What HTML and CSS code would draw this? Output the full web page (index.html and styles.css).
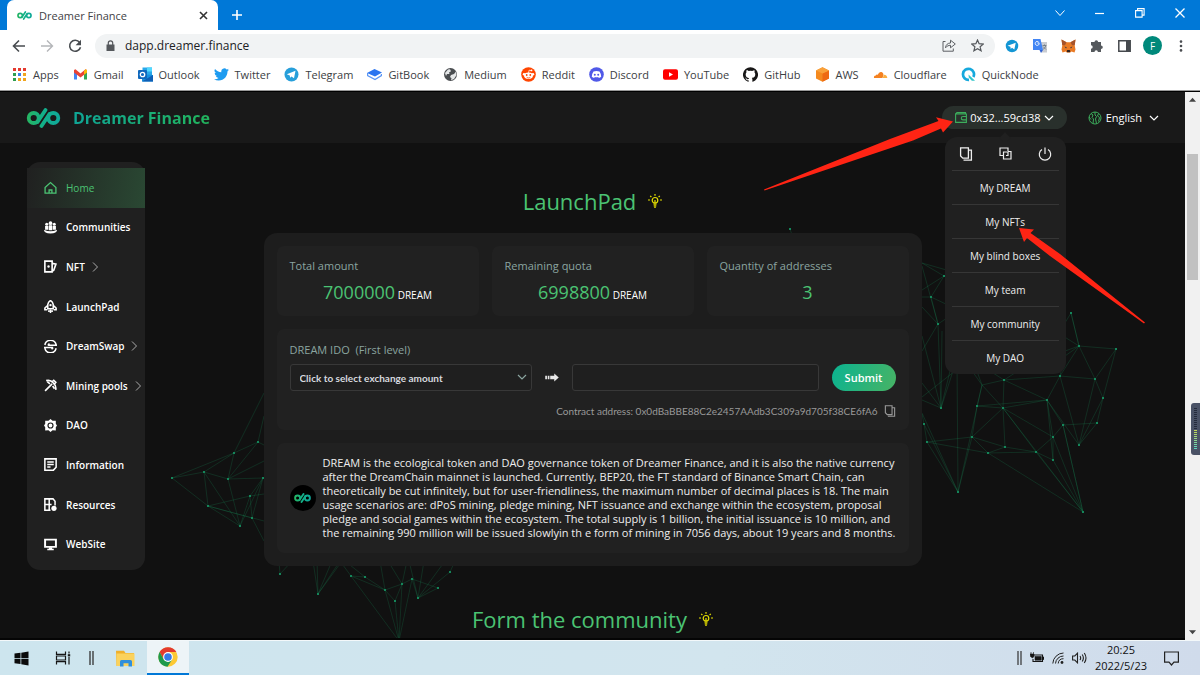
FILE: index.html
```html
<!DOCTYPE html>
<html lang="en">
<head>
<meta charset="utf-8">
<title>Dreamer Finance</title>
<link rel="stylesheet" href="styles.css">
</head>
<body>
<svg class="defs" aria-hidden="true">
  <defs>
    <linearGradient id="brand" gradientUnits="userSpaceOnUse" x1="0" y1="0" x2="34" y2="0"><stop offset="0" stop-color="#27b560"/><stop offset=".5" stop-color="#12b08a"/><stop offset="1" stop-color="#10a89b"/></linearGradient>
    <symbol id="logo" viewBox="0 0 34 20"><g fill="none" stroke="url(#brand)" stroke-width="3.800" stroke-linecap="round"><circle cx="7.200" cy="10" r="5"/><path d="M11 14L19 2"/><circle cx="26.800" cy="10" r="5"/><path d="M15 18L23 6"/></g></symbol>
    <symbol id="chev-down" viewBox="0 0 10 10"><path d="M1 3l4 4 4-4" fill="none" stroke="currentColor" stroke-width="1.2"/></symbol>
    <symbol id="chev-right" viewBox="0 0 10 10"><path d="M3 .5L7.500 5 3 9.500" fill="none" stroke="currentColor"/></symbol>
    <symbol id="copy" viewBox="0 0 14 14"><path d="M1.600.8h7.800v10.400H3.800L1.600 9zM4.500 13.200h7.900V3.200h-3" fill="none" stroke="currentColor" stroke-width="1.300"/></symbol>
    <symbol id="bulb" viewBox="0 0 14 14"><g fill="none" stroke="#e6e000" stroke-width="1.200"><circle cx="7" cy="6.300" r="2.800"/><path d="M7 0v1.800M2.200 1.800l1.200 1.200M11.800 1.800l-1.200 1.200M0 6h2M12 6h2M5.500 10.200h3M5.700 11.800h2.600M6.300 13.300h1.400M7 6v3"/></g></symbol>
  </defs>
</svg>

<div class="screen">
  <header class="tabstrip">
    <div class="tab">
      <svg class="tab-logo"><use href="#logo"/></svg>
      <span class="tab-title">Dreamer Finance</span>
      <button class="plain" aria-label="Close tab"><svg width="9" height="9" viewBox="0 0 9 9"><path d="M1 1l7 7M8 1L1 8" stroke="#333" stroke-width="1.600"/></svg></button>
    </div>
    <button class="plain new-tab" aria-label="New tab"><svg width="12" height="12" viewBox="0 0 12 12"><path d="M6 1v10M1 6h10" stroke="#fff" stroke-width="1.600"/></svg></button>
    <div class="window-controls">
      <button class="plain" aria-label="Search tabs"><svg width="10" height="10" viewBox="0 0 10 10"><path d="M.5 2.500L5 7.500l4.500-5" fill="none" stroke="#fff"/></svg></button>
      <button class="plain" aria-label="Minimize"><svg width="10" height="10" viewBox="0 0 10 10"><path d="M0 5.500h9" stroke="#fff" stroke-width="1.200"/></svg></button>
      <button class="plain" aria-label="Restore"><svg width="10" height="10" viewBox="0 0 10 10"><path d="M.6 2.600h6.500v6.500H.6zM2.600 2.600V.6h6.500v6.500h-2" fill="none" stroke="#fff" stroke-width="1.100"/></svg></button>
      <button class="plain" aria-label="Close"><svg width="10" height="10" viewBox="0 0 10 10"><path d="M.5.5l9 9M9.500.5l-9 9" stroke="#fff" stroke-width="1.300"/></svg></button>
    </div>
  </header>

  <div class="toolbar">
    <button class="plain" aria-label="Back"><svg width="14" height="14" viewBox="0 0 14 14"><path d="M13 7H2M7 1.500L1.500 7 7 12.500" fill="none" stroke="#484c50" stroke-width="1.600"/></svg></button>
    <button class="plain" aria-label="Forward"><svg width="14" height="14" viewBox="0 0 14 14"><path d="M1 7h11M7 1.500L12.500 7 7 12.500" fill="none" stroke="#b4b6b9" stroke-width="1.400"/></svg></button>
    <button class="plain" aria-label="Reload"><svg width="14" height="14" viewBox="0 0 14 14"><path d="M11.600 3.500A5.500 5.500 0 1 0 12.500 8.200" fill="none" stroke="#484c50" stroke-width="1.600"/><path d="M13 .8v5.400H7.600z" fill="#484c50"/></svg></button>
    <div class="address">
      <svg width="9" height="12" viewBox="0 0 9 12"><path d="M.5 4.500h8V11h-8z" fill="#55585c"/><path d="M2.300 5V3a2.200 2.200 0 0 1 4.400 0v2" fill="none" stroke="#55585c" stroke-width="1.200"/></svg>
      <input class="url" aria-label="Address" value="dapp.dreamer.finance">
      <button class="plain" aria-label="Share"><svg width="14" height="13" viewBox="0 0 14 13"><path d="M3.500 2.500H1v9.700h10.300V9.500" fill="none" stroke="#5c5f63"/><path d="M3.500 8.800c.3-3.200 2.300-4.700 5-4.800V1.200L13.300 5 8.500 8.800V6.300C6.500 6.300 5 7 3.500 8.800z" fill="none" stroke="#5c5f63"/></svg></button>
      <button class="plain" aria-label="Bookmark"><svg width="13" height="13" viewBox="0 0 13 13"><path d="M6.500 1l1.600 3.700 4.100.4-3.100 2.700 1 4-3.600-2.100-3.600 2.100 1-4L.8 5.100l4.100-.4z" fill="none" stroke="#55585c" stroke-width="1.200"/></svg></button>
    </div>
    <div class="extensions">
      <button class="plain" aria-label="Telegram"><svg width="14" height="14" viewBox="0 0 15 15"><circle cx="7.500" cy="7.500" r="6.700" fill="#1496d4"/><path d="M2.800 7.300l8.700-3.400-1.500 7.300-2.500-1.700-1.400 1.300-.3-2.400z" fill="#fff"/></svg></button>
      <button class="plain" aria-label="Translate"><svg width="14" height="14" viewBox="0 0 14 14"><path d="M6 3h8v10.500H8.500z" fill="#c9ccd1"/><path d="M0 0h7.500L10 11H0z" fill="#4285f4"/><path d="M6.500 11H10l-2 3z" fill="#2f5fd0"/><path d="M6.300 4H4.400M6.200 4.300A2 2 0 1 1 5.600 3" fill="none" stroke="#fff" stroke-width=".9"/><path d="M9.500 6.500h3.800M11.500 5.500v1M12.700 6.700c-.4 2-1.500 3-2.500 3.500M10 7.500l3 3" stroke="#66717c" stroke-width=".8" fill="none"/></svg></button>
      <button class="plain" aria-label="MetaMask"><svg width="15" height="14" viewBox="0 0 15 14"><path d="M.5.5l5 2.700h4L14.500.5l-.8 6 .8 4-1 3-3.200-.9-1 .9H5.700l-1-.9-3.200.9-1-3 .8-4z" fill="#e97a25"/><path d="M.5.5l5 2.700-1.500 3H1.300zM14.500.5l-5 2.700 1.500 3h2.700z" fill="#a5532b"/><path d="M3.500 7.500l2.200.8-.6 1.200zM11.500 7.500l-2.200.8.600 1.200z" fill="#263347"/><path d="M5.700 12l.6-1h2.400l.6 1-.4 1.300H6.100z" fill="#30221e"/></svg></button>
      <button class="plain" aria-label="Extensions"><svg width="14" height="14" viewBox="0 0 14 14"><path d="M1 3h3.500a1.800 1.800 0 1 1 3.600 0H11v3.500a1.800 1.800 0 1 1 0 3.600V13H7.900a1.700 1.700 0 1 0-3.400 0H1V9.700a1.700 1.700 0 1 0 0-3.400z" fill="#55595d"/></svg></button>
      <button class="plain" aria-label="Side panel"><svg width="13" height="12" viewBox="0 0 13 12"><path d="M.8.8h11.400v10.400H.8z" fill="none" stroke="#45494d" stroke-width="1.500"/><path d="M8 1h4v10H8z" fill="#45494d"/></svg></button>
      <button class="plain avatar">F</button>
      <button class="plain" aria-label="Menu"><svg width="4" height="12" viewBox="0 0 4 12"><g fill="#4a4d51"><circle cx="2" cy="1.600" r="1.300"/><circle cx="2" cy="6" r="1.300"/><circle cx="2" cy="10.400" r="1.300"/></g></svg></button>
    </div>
  </div>

  <nav class="bookmarks" aria-label="Bookmarks">
    <a href="#"><svg viewBox="0 0 15 15"><path d="M1 1h3v3H1zM6 1h3v3H6zM11 1h3v3h-3z" fill="#e5392e"/><path d="M1 6h3v3H1z" fill="#2f9e4f"/><path d="M6 6h3v3H6z" fill="#3b7fe8"/><path d="M11 6h3v3h-3zM11 11h3v3h-3zM6 11h3v3H6z" fill="#f0a51e"/><path d="M1 11h3v3H1z" fill="#2f9e4f"/></svg>Apps</a>
    <a href="#"><svg viewBox="0 0 15 15"><path d="M1 3.500v9h3V7z" fill="#4285f4"/><path d="M14 3.500v9h-3V7z" fill="#34a853"/><path d="M1 3l1.500-.7L7.500 6.500l5-4.200L14 3v2.500l-6.500 5L1 5.500z" fill="#ea4335"/><path d="M11 4v3.800l3-2.300V3l-1.500-.7z" fill="#fbbc04"/></svg>Gmail</a>
    <a href="#"><svg viewBox="0 0 15 15"><path d="M4.500.5H14v11H4.500z" fill="#28a8ea"/><path d="M9 .5h5v4H9z" fill="#50d9ff"/><path d="M4 7l11 1v6.500H4z" fill="#1490df"/><path d="M4 14.500L15 8v6.500z" fill="#0f5fb5"/><rect y="3" width="9" height="9" rx="1" fill="#0f68bd"/><circle cx="4.500" cy="7.500" r="2.200" fill="none" stroke="#fff" stroke-width="1.300"/></svg>Outlook</a>
    <a href="#"><svg viewBox="0 0 24 24"><path d="M23.950 4.570a10 10 0 0 1-2.820.77 4.960 4.960 0 0 0 2.160-2.720c-.95.550-2 .95-3.130 1.180a4.920 4.920 0 0 0-8.380 4.480C7.690 8.090 4.070 6.130 1.640 3.160a4.920 4.920 0 0 0 1.520 6.570 4.900 4.900 0 0 1-2.230-.61v.06a4.920 4.920 0 0 0 3.950 4.830 5 5 0 0 1-2.210.08 4.940 4.940 0 0 0 4.600 3.420A9.870 9.870 0 0 1 0 19.540a13.990 13.990 0 0 0 7.550 2.210c9.050 0 14-7.500 14-13.980 0-.21 0-.42-.02-.63a9.940 9.940 0 0 0 2.420-2.570z" fill="#1d9bf0"/></svg>Twitter</a>
    <a href="#"><svg viewBox="0 0 15 15"><circle cx="7.500" cy="7.500" r="7" fill="#279fda"/><path d="M2.800 7.300l8.700-3.600-1.500 7.600-2.500-1.800-1.400 1.300-.3-2.400z" fill="#fff"/></svg>Telegram</a>
    <a href="#"><svg viewBox="0 0 15 15"><path d="M0 6l7.500-4L15 5.500 8 9.500z" fill="#2b75f0"/><path d="M.5 6v2.500L8 12.500l6.500-4V7" fill="none" stroke="#5a96f5" stroke-width="1.400"/></svg>GitBook</a>
    <a href="#"><svg viewBox="0 0 15 15"><circle cx="7.500" cy="7.500" r="6.500" fill="#4a4d50"/><path d="M2 6l3-3.500 2-.3 1 2L6 5.500 6.500 7H4L3 9zM8 8l3-1 2-2.500L13.500 8 11 12l-3 1.200.5-2L7 10z" fill="#e5e7e8"/></svg>Medium</a>
    <a href="#"><svg viewBox="0 0 15 15"><circle cx="7.500" cy="7.500" r="7.300" fill="#ff4500"/><ellipse cx="7.500" cy="8.700" rx="4.500" ry="3.100" fill="#fff"/><circle cx="3" cy="7.300" r="1.200" fill="#fff"/><circle cx="12" cy="7.300" r="1.200" fill="#fff"/><circle cx="10.500" cy="3.400" r=".9" fill="#fff"/><path d="M7.500 6l.6-2.800 2.200.4" fill="none" stroke="#fff" stroke-width=".7"/><circle cx="5.700" cy="8" r=".9" fill="#ff4500"/><circle cx="9.300" cy="8" r=".9" fill="#ff4500"/><path d="M5.600 10.200q1.900 1.200 3.800 0" fill="none" stroke="#ff4500" stroke-width=".6"/></svg>Reddit</a>
    <a href="#"><svg viewBox="0 0 15 15"><circle cx="7.500" cy="7.500" r="7.300" fill="#5059e8"/><path d="M4.500 4.500q3-1.200 6 0 1.800 2.500 1.700 5.200-1 1-2.400 1.200l-.6-1q-1.700.5-3.400 0l-.6 1q-1.400-.2-2.400-1.200-.1-2.700 1.700-5.200z" fill="#fff"/><circle cx="5.800" cy="7.800" r="1" fill="#5059e8"/><circle cx="9.200" cy="7.800" r="1" fill="#5059e8"/></svg>Discord</a>
    <a href="#"><svg viewBox="0 0 15 15"><rect y="2.300" width="15" height="10.500" rx="2" fill="#f00"/><path d="M6 5.300v4.400l4-2.200z" fill="#fff"/></svg>YouTube</a>
    <a href="#"><svg viewBox="0 0 24 24"><path d="M12 .3a12 12 0 0 0-3.800 23.400c.6.1.8-.3.800-.6v-2c-3.300.7-4-1.600-4-1.600-.6-1.400-1.400-1.800-1.400-1.800-1-.7.1-.7.1-.7 1.200 0 1.900 1.200 1.900 1.200 1 1.800 2.800 1.300 3.500 1 0-.8.4-1.300.7-1.600-2.700-.3-5.500-1.300-5.500-6 0-1.200.5-2.300 1.300-3.100-.2-.4-.6-1.600 0-3.200 0 0 1-.3 3.400 1.200a11.500 11.500 0 0 1 6 0c2.300-1.500 3.300-1.200 3.300-1.200.6 1.600.2 2.800 0 3.200.9.800 1.300 1.900 1.300 3.200 0 4.600-2.800 5.600-5.500 5.900.5.400.9 1 .9 2.200v3.300c0 .3.100.7.800.6A12 12 0 0 0 12 .3z" fill="#181717"/></svg>GitHub</a>
    <a href="#"><svg viewBox="0 0 15 15"><path d="M7.500.3L14 3.500v8l-6.500 3.200L1 11.500v-8z" fill="#f58a1f"/><path d="M7.500 6.500v8.200L14 11.500v-8z" fill="#ee6a13"/><path d="M1 3.500l6.500 3 6.500-3L7.500.3z" fill="#f9a13a"/></svg>AWS</a>
    <a href="#"><svg viewBox="0 0 15 15"><path d="M1 11q-.5-2.200 1.800-2.400.5-1.600 2-.9Q6 4.300 8.500 5q2 .6 2 3L9.500 11z" fill="#f48120"/><path d="M9.800 11l1-3.300q3-.2 3.500 3.300z" fill="#faad3f"/></svg>Cloudflare</a>
    <a href="#"><svg viewBox="0 0 15 15"><path d="M8 12.800A5.500 5.500 0 1 1 12.300 10" fill="none" stroke="#16a9dd" stroke-width="2.700"/><path d="M7.500 7.500l6.500 6.300h-3.200l-3-3.300z" fill="#32c6c9"/></svg>QuickNode</a>
  </nav>

  <div class="browser-view">
    <div class="page">
      <svg class="network" viewBox="0 91 1185 549" preserveAspectRatio="xMidYMin slice" aria-hidden="true">
        <path class="edges" d="M172 477L204 471 234 452 258 441 264 415M172 477L234 452M172 477L208 505 250 495 264 493M204 471L228 478 263 477M204 471L208 505 240 525 204 471M234 452L228 478 258 441 266 445M234 452L264 392M228 478L264 460M228 478L240 525 250 495 263 477 252 517 264 540M208 505L252 517 250 495M240 525L263 477M208 505L264 520M280 573L279 560M280 573L292 560M318 593L313 560M318 593L317 560M318 593L340 560M318 593L342 560M318 593L332 560M351 575L385 589 365 576 351 575 340 560M365 576L345 560M385 589L402 583 412 578 418 597 409 560M385 589L395 600 402 583 407 560M385 589L380 560M402 583L388 560M385 589L399 640 351 575M395 600L399 640 402 583M412 578L399 640M412 578L438 587 418 597 450 571 455 560M418 597L424 560M418 597L445 560M790 228L794 240M922 262L944 275 922 289M922 262L950 270M922 265L938 323 931 296 922 296M931 296L944 275M931 296L950 305M938 323L922 306M938 323L941 407 922 335M938 323L950 315M938 323L922 350M941 407L922 382M941 407L922 399M941 407L950 370M941 407L953 370M941 407L942 330M922 396L955 370M927 441L924 423 922 413M924 423L958 491 927 441 972 436M927 441L988 452M958 491L922 412M958 491L957 360M958 491L972 436 977 405 982 384 958 350M958 491L982 384 1004 379 1060 375 1095 378 1103 397 1097 422 1079 444M977 405L1003 407 1047 399 1060 375M982 384L1003 407 1004 379 1047 399M977 405L1047 399M1003 407L972 436 1005 446 988 452M972 436L988 452 1036 451 1005 446 1003 407 1053 436 1063 424M1003 407L1036 451 1053 436 1047 399 1079 444 1060 375M1047 399L1053 459 1036 451 1083 511 1003 407M1053 436L1053 459 1083 511 988 452M1053 436L1083 511 1063 424 1047 399M1063 424L1097 422M1063 424L1083 511M1079 444L1103 397 1116 348 1079 345 1095 378 1116 348M1079 345L1071 312 1060 330M1079 345L1060 375 1065 350 1079 345 1055 330M1071 312L1079 345M1065 355L1079 345M1079 444L1095 378M982 384L975 365M1004 379L990 370M1004 379L1018 370"/>
        <path class="dots" d="M172 477h0M204 471h0M234 452h0M258 441h0M228 478h0M263 477h0M208 505h0M240 525h0M250 495h0M252 517h0M280 573h0M318 593h0M351 575h0M365 576h0M385 589h0M402 583h0M395 600h0M412 578h0M418 597h0M438 587h0M450 571h0M790 228h0M944 275h0M931 296h0M938 323h0M941 407h0M924 423h0M927 441h0M958 491h0M977 405h0M1003 407h0M1004 379h0M1060 375h0M1095 378h0M1103 397h0M1097 422h0M1079 444h0M1063 424h0M1047 399h0M972 436h0M1005 446h0M988 452h0M1036 451h0M1053 436h0M1053 459h0M1083 511h0M1071 312h0M1079 345h0M1116 348h0"/>
      </svg>

      <header class="site-header">
        <a class="brand" href="#"><svg class="brand-logo"><use href="#logo"/></svg><span>Dreamer Finance</span></a>
        <div class="header-actions">
          <div class="wallet">
            <button class="plain wallet-button" aria-expanded="true">
              <svg width="12" height="11" viewBox="0 0 12 11"><path d="M.6 2h10.800v8.400H.6zM.6 2L2 .6h8.500V2M11.400 4.500H8a1.500 1.500 0 0 0 0 3.400h3.400" fill="none" stroke="#3cae5c" stroke-width="1.100"/></svg>
              <span>0x32...59cd38</span>
              <svg width="10" height="10"><use href="#chev-down"/></svg>
            </button>
            <div class="wallet-menu">
              <div class="wallet-tools">
                <button class="plain" aria-label="Copy address"><svg width="14" height="14"><use href="#copy"/></svg></button>
                <button class="plain" aria-label="Switch wallet"><svg width="13" height="13" viewBox="0 0 13 13"><path d="M5 8.500H1V1h8v3M4.500 5.500V4.500M9 4.500h3V12H4.500V5h4.500v3.500H7" fill="none" stroke="currentColor" stroke-width="1.200"/></svg></button>
                <button class="plain" aria-label="Disconnect"><svg width="14" height="14" viewBox="0 0 14 14"><path d="M4 2.500a5.700 5.700 0 1 0 6 0M7 .5V7" fill="none" stroke="currentColor" stroke-width="1.200"/></svg></button>
              </div>
              <a href="#">My DREAM</a>
              <a href="#">My NFTs</a>
              <a href="#">My blind boxes</a>
              <a href="#">My team</a>
              <a href="#">My community</a>
              <a href="#">My DAO</a>
            </div>
          </div>
          <button class="plain language">
            <svg width="14" height="14" viewBox="0 0 14 14"><g fill="none" stroke="#3cae5c"><circle cx="7" cy="7" r="6"/><path d="M3 2.500l2 1.500-1 2.500 1.500 1.500L5 12.500M7 1v3l1.500 1.500L7.500 8l1 4.500M10.500 2.500L9.500 5l2 1.500-1 4M1 6l2 2.500"/></g></svg>
            <span>English</span>
            <svg width="10" height="10"><use href="#chev-down"/></svg>
          </button>
        </div>
      </header>

      <main class="content">
        <nav class="sidebar" aria-label="Main">
          <a class="active" href="#"><svg viewBox="0 0 12 12"><path d="M1 6l5-4.500L11 6v5.200H1zM4.700 11V8.300h2.600V11" fill="none" stroke="currentColor" stroke-width="1.200"/></svg>Home</a>
          <a href="#"><svg viewBox="0 0 12 12"><g fill="currentColor"><circle cx="6" cy="2" r="1.700"/><circle cx="2.500" cy="3" r="1.400"/><circle cx="9.500" cy="3" r="1.400"/><path d="M4.500 4h3v4.500h-3zM1 4.500h3V8H1zM8 4.500h3V8H8zM0 8q6 3 12 0 0 3.500-6 3.500T0 8z"/></g></svg>Communities</a>
          <a href="#"><svg viewBox="0 0 12 12"><path d="M.8 1h6.700v10H.8zM7.500 3l3.500.8L9 9.500l-1.500 1" fill="none" stroke="currentColor" stroke-width="1.500"/><circle cx="4.200" cy="6" r="1.100" fill="currentColor"/></svg>NFT<svg class="more"><use href="#chev-right"/></svg></a>
          <a href="#"><svg viewBox="0 0 12 12"><path d="M3.500 8V4q.5-2.500 2.500-3.500Q8 1.500 8.500 4v4zM3.300 5L.8 7.500V9H3M8.700 5l2.500 2.500V9H9M4.500 9.500V11M7.500 9.500V11M6 9v3" fill="none" stroke="currentColor" stroke-width="1.400"/><circle cx="6" cy="4.700" r="1.100" fill="currentColor"/></svg>LaunchPad</a>
          <a href="#"><svg viewBox="0 0 12 12"><path d="M.8 4.600A5.300 5.300 0 0 1 11.200 4.600M11.200 7.600A5.300 5.300 0 0 1 .8 7.600M0 6.900h8.500M3.500 4.900H12M3.500 5L5 3.300M8.500 6.900L7 8.600" fill="none" stroke="currentColor" stroke-width="1.400"/></svg>DreamSwap<svg class="more"><use href="#chev-right"/></svg></a>
          <a href="#"><svg viewBox="0 0 12 12"><path d="M1 11l6.500-6.500M2 1.500q4-1 6.300 1.800Q11.500 6 10.800 10M3 2.500l2.500 2M9.700 9L8 6.500M7 3l2-1.700L10.900 3 9.300 5" fill="none" stroke="currentColor" stroke-width="1.500"/></svg>Mining pools<svg class="more"><use href="#chev-right"/></svg></a>
          <a href="#"><svg viewBox="0 0 12 12"><path d="M6 0l1.900 1.600 3-.1v2.800L12 6l-1.100 1.700v2.800l-3-.1L6 12l-1.900-1.600-3 .1V7.700L0 6l1.100-1.700V1.500l3 .1z" fill="currentColor"/><circle cx="6" cy="6" r="2.300" fill="none" stroke="#202020" stroke-width="1.100"/></svg>DAO</a>
          <a href="#"><svg viewBox="0 0 12 12"><path d="M.8.8h10.400v7.700l-2.500 2.700H.8zM3 3.700h6M3 6h6M3 8.300h3" fill="none" stroke="currentColor" stroke-width="1.400"/></svg>Information</a>
          <a href="#"><svg viewBox="0 0 12 12"><path d="M6 11.200H.8V.8h7.500L10.200 3v4M4.800 1v10M1 6h6" fill="none" stroke="currentColor" stroke-width="1.400"/><circle cx="9.200" cy="9.500" r="2.400" fill="currentColor"/></svg>Resources</a>
          <a href="#"><svg viewBox="0 0 12 12"><path d="M1 1.500h10v6.700H1z" fill="none" stroke="currentColor" stroke-width="1.800"/><path d="M4.500 8.500h3V10H9v1.300H3V10h1.500z" fill="currentColor"/></svg>WebSite</a>
        </nav>

        <div class="center">
          <h1 class="title">LaunchPad <svg><use href="#bulb"/></svg></h1>
          <section class="card">
            <div class="stats">
              <div class="tile stat"><h2>Total amount</h2><p><b>7000000</b> DREAM</p></div>
              <div class="tile stat"><h2>Remaining quota</h2><p><b>6998800</b> DREAM</p></div>
              <div class="tile stat"><h2>Quantity of addresses</h2><p><b>3</b></p></div>
            </div>
            <form class="tile ido">
              <label for="amount">DREAM IDO&nbsp; (First level)</label>
              <div class="ido-row">
                <div class="select-wrap">
                  <select id="amount"><option>Click to select exchange amount</option></select>
                  <svg class="select-arrow"><use href="#chev-down"/></svg>
                </div>
                <svg class="arrow-right" viewBox="0 0 12 8"><path d="M0 2.500h1.500v3H0zM2.200 2.500h1.500v3H2.200zM4.400 2.500H8V.5L12 4 8 7.500v-2H4.400z" fill="#e8e8e8"/></svg>
                <input class="result" aria-label="Received amount">
                <button class="submit" type="button">Submit</button>
              </div>
              <p class="contract">Contract address: 0x0dBaBBE88C2e2457AAdb3C309a9d705f38CE6fA6 <button class="plain" type="button" aria-label="Copy contract address"><svg width="12" height="12"><use href="#copy"/></svg></button></p>
            </form>
            <div class="tile about">
              <span class="token"><svg><use href="#logo"/></svg></span>
              <p>DREAM is the ecological token and DAO governance token of Dreamer Finance, and it is also the native currency<br>after the DreamChain mainnet is launched. Currently, BEP20, the FT standard of Binance Smart Chain, can<br>theoretically be cut infinitely, but for user-friendliness, the maximum number of decimal places is 18. The main<br>usage scenarios are: dPoS mining, pledge mining, NFT issuance and exchange within the ecosystem, proposal<br>pledge and social games within the ecosystem. The total supply is 1 billion, the initial issuance is 10 million, and<br>the remaining 990 million will be issued slowlyin th e form of mining in 7056 days, about 19 years and 8 months.</p>
            </div>
          </section>
          <h1 class="title second">Form the community <svg><use href="#bulb"/></svg></h1>
        </div>
      </main>
    </div>
    <div class="scrollbar" aria-hidden="true">
      <svg viewBox="0 0 8 5"><path d="M0 5l4-4.500L8 5z" fill="#444"/></svg>
      <span class="thumb"></span>
      <svg viewBox="0 0 8 5"><path d="M0 0l4 4.500L8 0z" fill="#444"/></svg>
    </div>
  </div>

  <footer class="taskbar">
    <button class="plain start" aria-label="Start"><svg width="15" height="15" viewBox="0 0 15 15"><path d="M.5 2.600L6.500 1.800v5.200h-6zM7.300 1.700L14.500.6V7H7.300zM.5 7.800h6V13l-6-.8zM7.300 7.800h7.200v6.600l-7.200-1.100z" fill="#0b0b0b"/></svg></button>
    <button class="plain taskview" aria-label="Task view"><svg width="16" height="14" viewBox="0 0 16 14"><path d="M1.500.5v2.800h9V.5M1.500 13.500v-2.800h9v2.800M1.500 5h9v4h-9zM14 .5v2M14 6v7.500" fill="none" stroke="#151515" stroke-width="1.200"/><path d="M12.800 3.200h2.400v2.200h-2.400z" fill="#151515"/></svg></button>
    <svg class="divider" viewBox="0 0 5 14"><path d="M1 0v14M4 0v14" stroke="#333" stroke-width="1.300"/></svg>
    <button class="plain explorer" aria-label="File Explorer"><svg width="19" height="17" viewBox="0 0 19 17"><path d="M0 .8h8L9.500 3H18v13H.5z" fill="#f0b02b"/><path d="M.5 3.500h18V16H.5z" fill="#fbd25c"/><path d="M4 16.500v-5q0-1.500 1.500-1.500h9q1.500 0 1.500 1.500v5h-3.500V13.200H7.500v3.300z" fill="#2f8fdc"/></svg></button>
    <button class="plain chrome" aria-label="Chrome"><svg width="20" height="20" viewBox="0 0 20 20"><circle cx="10" cy="10" r="9.700" fill="#fcc934"/><path d="M1.600 5.100A9.700 9.700 0 0 1 18.400 5.100H10L5.800 12.500z" fill="#e33b2e"/><path d="M1.600 5.100A9.700 9.700 0 0 0 9.500 19.700l4.700-7.300-4.200 2.400-4.200-2.400z" fill="#1e9a4c"/><circle cx="10" cy="10" r="4.900" fill="#fff"/><circle cx="10" cy="10" r="3.800" fill="#357ae8"/></svg></button>
    <div class="tray">
      <svg width="5" height="14" viewBox="0 0 5 14"><path d="M1 0v14M4 0v14" stroke="#333" stroke-width="1.200"/></svg>
      <svg width="14" height="12" viewBox="0 0 14 12"><path d="M4 3h8.500v6.500H3V7" fill="none" stroke="#151515" stroke-width="1.100"/><path d="M5 4.500h6.300v3.700H5zM12.500 5H14v2.500h-1.500zM0 2h4v2.500L2.500 6 .5 4.500zM1 0v2M3.500 0v2" fill="#151515" stroke="#151515" stroke-width=".6"/></svg>
      <svg width="12" height="12" viewBox="0 0 12 12"><path d="M.8 11.500A11 11 0 0 1 11.500 1M3.500 11.500a8 8 0 0 1 8-7.500M6.200 11.500a5.300 5.300 0 0 1 5.300-4.800" fill="none" stroke="#222"/><circle cx="10" cy="10.500" r="1.400" fill="#222"/></svg>
      <svg width="15" height="12" viewBox="0 0 15 12"><path d="M.6 4h2.200L5.500 1.200v9.600L2.800 8H.6zM8 4q1.400 2 0 4M10.200 2.500q2.400 3.500 0 7M12.300 1q3.400 5 0 10" fill="none" stroke="#222" stroke-width="1.100"/></svg>
      <div class="clock"><time>20:25</time><time>2022/5/23</time></div>
      <svg width="15" height="15" viewBox="0 0 15 15"><path d="M.6 1h13.800v10.200H10L7.500 14 5 11.200H.6z" fill="none" stroke="#222" stroke-width="1.200"/></svg>
    </div>
  </footer>

  <svg class="annotations" viewBox="0 0 1200 675" preserveAspectRatio="none" aria-hidden="true">
    <path d="M953 121.500L936 117.300 938.500 121 890 139 764 189.500 764.500 190.500 913 140.500 941 128.500 943 132.500z"/>
    <path d="M1019 228L1034 229.500 1030.500 233 1060 254 1145 322.500 1144 323.500 1050 256 1027 238 1024 242z"/>
  </svg>
  <div class="volume" aria-hidden="true"><span></span></div>
</div>
</body>
</html>
```

FILE: styles.css
```css
* { box-sizing: border-box; }

body {
  margin: 0;
  font-family: "Open Sans", "Noto Sans", sans-serif;
  font-size: 11px;
  background: #111;
}

h1, h2, p { margin: 0; font-weight: 400; }
a { color: inherit; text-decoration: none; }
svg { display: block; flex: none; }
.defs { position: absolute; width: 0; height: 0; }

.plain {
  display: flex;
  align-items: center;
  justify-content: center;
  border: 0;
  padding: 0;
  background: none;
  color: inherit;
  font: inherit;
}

.screen {
  position: relative;
  display: flex;
  flex-direction: column;
  height: 100vh;
  overflow: hidden;
}

/* Browser chrome */
.tabstrip {
  display: flex;
  align-items: stretch;
  flex: none;
  height: 30px;
  padding-left: 7px;
  background: #0078d7;
}
.tab {
  display: flex;
  align-items: center;
  width: 211px;
  padding: 0 10px;
  gap: 7px;
  border-radius: 7px 7px 0 0;
  background: #fff;
  color: #3f4246;
}
.tab-logo { width: 15px; height: 9px; }
.tab-title { flex: 1; }
.new-tab { width: 38px; }
.window-controls { display: flex; margin-left: auto; padding-bottom: 4px; }
.window-controls button { width: 40px; }

.toolbar {
  display: flex;
  align-items: center;
  flex: none;
  height: 31px;
  padding: 0 17px 0 12px;
  gap: 14px;
  background: #fff;
}
.address {
  display: flex;
  align-items: center;
  flex: 1;
  height: 24px;
  margin-left: -1px;
  padding: 0 11px;
  gap: 15px;
  border-radius: 12px;
  background: #f1f3f4;
}
.url {
  flex: 1;
  min-width: 0;
  margin-left: -5px;
  padding: 0;
  border: 0;
  background: none;
  color: #202124;
  font: 12px/20px "Open Sans", sans-serif;
}
.extensions { display: flex; align-items: center; gap: 14px; margin-left: -4px; }
.avatar {
  width: 19px;
  height: 19px;
  margin: 0 3px 0 -2px;
  border-radius: 50%;
  background: #00897b;
  color: #fff;
  font-size: 10px;
}

.bookmarks {
  display: flex;
  align-items: center;
  flex: none;
  height: 30px;
  padding: 0 12px 3px;
  gap: 14px;
  border-bottom: 1px solid #999;
  background: #fff;
  color: #3c4043;
}
.bookmarks a { display: flex; align-items: center; gap: 6px; }
.bookmarks svg { width: 15px; height: 15px; }

/* Web page */
.browser-view { display: flex; flex: 1; min-height: 0; border-top: 1px solid #000; }
.page {
  position: relative;
  flex: 1;
  overflow: hidden;
  border-bottom: 2px solid #050505;
  background: #111;
  color: #fff;
}
.network { position: absolute; top: 0; left: 0; width: 100%; height: 100%; }
.edges { fill: none; stroke: #17a065; stroke-opacity: .2; stroke-width: 1; }
.dots { fill: none; stroke: #15855a; stroke-width: 2; stroke-linecap: square; }

.site-header {
  position: relative;
  z-index: 2;
  display: flex;
  align-items: center;
  justify-content: space-between;
  height: 51px;
  padding: 0 26px;
  background: #191919;
}
.brand { display: flex; align-items: center; gap: 12px; }
.brand-logo { width: 35px; height: 20px; }
.brand span {
  background: linear-gradient(90deg, #0fa596, #22b45c);
  background-clip: text;
  color: transparent;
  font: 700 16px/22px "Open Sans", sans-serif;
}
.header-actions { display: flex; align-items: center; gap: 21px; font-weight: 500; }
.wallet { position: relative; }
.wallet-button {
  gap: 3px;
  height: 23px;
  padding: 0 13px;
  border-radius: 12px;
  background: #29302c;
}
.language { gap: 4px; }
.language span { margin-right: 3px; }

.wallet-menu {
  position: absolute;
  top: 31px;
  right: 1px;
  width: 121px;
  padding: 0 7px;
  border-radius: 12px;
  background: #202020;
  color: #eee;
  font-size: 10px;
}
.wallet-menu::before {
  content: "";
  position: absolute;
  top: -3px;
  left: 56px;
  width: 8px;
  height: 8px;
  background: #202020;
  transform: rotate(45deg);
}
.wallet-menu > a {
  display: flex;
  align-items: center;
  justify-content: center;
  height: 34px;
  border-top: 1px solid #363636;
}
.wallet-tools {
  position: relative;
  display: flex;
  align-items: center;
  justify-content: space-between;
  height: 33px;
  padding: 0 7px;
}

.content {
  position: relative;
  display: grid;
  grid-template-columns: 1fr minmax(0, 658px) 1fr;
  align-items: start;
}
.sidebar {
  display: flex;
  flex-direction: column;
  width: 118px;
  min-height: 408px;
  margin: 19px 0 0 27px;
  padding: 6px 0;
  border-radius: 13px;
  background: #202020;
  font-size: 10px;
  font-weight: 600;
}
.sidebar a {
  display: flex;
  align-items: center;
  flex: 1;
  padding-left: 17px;
  white-space: nowrap;
}
.sidebar svg { width: 13px; height: 13px; margin-right: 9px; }
.sidebar .more { width: 10px; height: 10px; margin: 0 0 0 5px; color: #aaa; }
.sidebar .active { background: linear-gradient(100deg, #202020, #2a4833); color: #4bc373; font-weight: 500; }

.title {
  display: flex;
  align-items: center;
  justify-content: center;
  gap: 12px;
  height: 60px;
  margin: 28px 0 2px;
  color: #4bc373;
  font-size: 22px;
  line-height: 30px;
}
.title svg { width: 14px; height: 14px; }
.title.second { margin-top: 23px; }

.card {
  display: grid;
  gap: 13px;
  padding: 13px;
  border-radius: 13px;
  background: #1d1d1d;
}
.tile { border-radius: 7px; background: #212121; }
.stats { display: grid; grid-template-columns: repeat(3, 1fr); gap: 13px; }
.stat { height: 70px; padding: 12px 13px; }
.stat h2 { color: #8ba5a0; font-size: 11px; line-height: 16px; }
.stat p { margin-top: 6px; text-align: center; font-size: 10px; line-height: 24px; }
.stat b { color: #4bc373; font-weight: 400; font-size: 18px; }

.ido { height: 101px; padding: 13px; color: #8ba5a0; }
.ido label { display: block; line-height: 16px; }
.ido-row { display: flex; align-items: center; gap: 13px; margin-top: 6px; }
.select-wrap { position: relative; flex: 1; }
.ido select, .result {
  display: block;
  width: 100%;
  height: 27px;
  border: 1px solid #383838;
  border-radius: 3px;
  background: #1f1f1f;
  color: #d6d9df;
}
.ido select {
  appearance: none;
  padding: 0 9px;
  font: 700 10px/16px Lato, sans-serif;
}
.select-arrow { position: absolute; top: 8px; right: 5px; width: 10px; height: 10px; }
.arrow-right { width: 14px; height: 9px; }
.result { flex: 0 1 247px; min-width: 0; }
.submit {
  width: 64px;
  height: 27px;
  border: 0;
  border-radius: 14px;
  background: linear-gradient(110deg, #0bb391, #48b364);
  color: #fff;
  font: 600 11px/16px "Open Sans", sans-serif;
}
.contract {
  display: flex;
  align-items: center;
  justify-content: flex-end;
  gap: 6px;
  margin-top: 12px;
  color: #999;
  font: 10px/16px Lato, sans-serif;
}

.about {
  display: flex;
  align-items: center;
  gap: 7px;
  height: 110px;
  padding: 0 13px;
  font-weight: 500;
  line-height: 14px;
  color: #eee;
}
.about p { white-space: nowrap; }
.token {
  display: flex;
  align-items: center;
  justify-content: center;
  flex: none;
  width: 26px;
  height: 26px;
  border-radius: 50%;
  background: #000;
}
.token svg { width: 17px; height: 10px; }

.scrollbar {
  display: flex;
  flex-direction: column;
  align-items: center;
  width: 15px;
  padding: 5px 0;
  background: #f1f1f1;
}
.scrollbar svg { width: 7px; height: 5px; }
.thumb { width: 11px; height: 126px; margin: 52px 0 auto; background: #c1c1c1; }

/* Desktop taskbar */
.taskbar {
  display: flex;
  align-items: center;
  flex: none;
  height: 35px;
  border-top: 1px solid #f3f8fa;
  background: linear-gradient(90deg, #cde5ee, #d2e5ee 60%, #d0dbeb);
  color: #111;
}
.start { width: 42px; height: 100%; }
.taskview { width: 42px; height: 100%; }
.divider { width: 5px; height: 14px; margin-left: 5px; }
.explorer { width: 31px; height: 100%; margin-left: 16px; }
.chrome {
  width: 42px;
  height: 100%;
  margin-left: 6px;
  border-bottom: 2px solid #0078d7;
  background: #edf4f7;
}
.tray { display: flex; align-items: center; gap: 8px; margin-left: auto; padding-right: 21px; }
.clock {
  display: flex;
  flex-direction: column;
  align-items: center;
  margin-right: 9px;
  line-height: 16px;
}

/* Layers over the desktop */
.annotations {
  position: absolute;
  inset: 0;
  z-index: 5;
  width: 100%;
  height: 100%;
  fill: #ff2414;
  pointer-events: none;
}
.volume {
  position: absolute;
  top: 403px;
  right: 0;
  z-index: 4;
  width: 9px;
  height: 52px;
  padding: 5px 3px;
  border-radius: 3px 0 0 3px;
  background: #4a5266;
}
.volume span {
  display: block;
  height: 42px;
  background:
    repeating-linear-gradient(transparent 0 1px, #4a5266 1px 2px),
    linear-gradient(#252b3c 50%, #c9d94f 50%, #54d5c5);
}
```
